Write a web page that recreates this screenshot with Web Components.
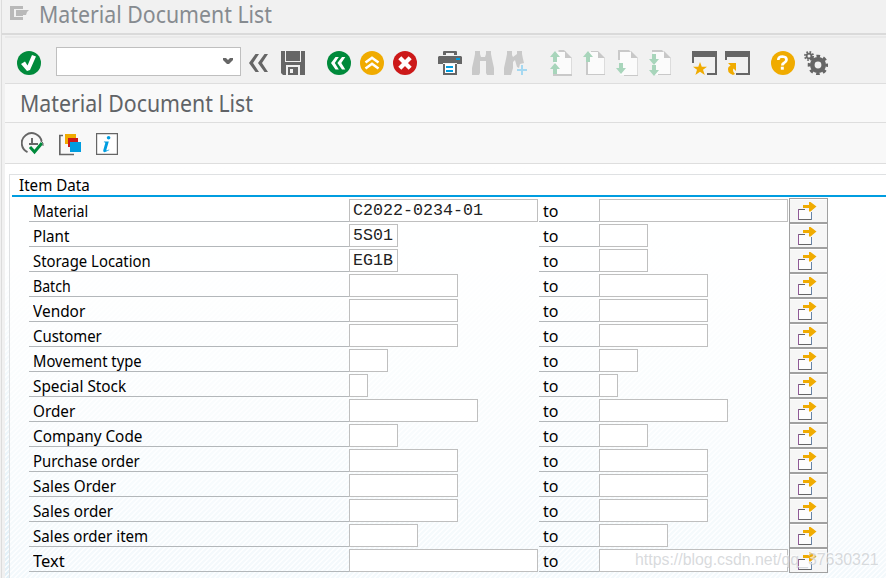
<!DOCTYPE html>
<html lang="en">
<head>
<meta charset="utf-8">
<title>Material Document List</title>
<style>
  body { margin: 0; overflow: hidden; }
</style>
</head>
<body>
<sap-window></sap-window>
<script>
// every icon is drawn in its own pixel box: [width, height, markup]
const arrowUp = "M0 6 L5 0 L10 6 H7 V11 H3 V6Z";
const arrowDown = "M0 5 H3 V0 H7 V5 H10 L5 11Z";
const page = `<path d="M7 2 H16 V8 H22 V25 H4 V2Z" fill="#fbfbfb"/><path d="M15 1 L22 8 H15Z" fill="#c8c8c8"/><path d="M21 8 H22 V25 H21Z" fill="#dcdcdc"/>`;
const frame = `<path d="M0 0 H25 V24 H15 V22 H23 V6 H2 V12 H0Z" fill="#666"/>`;
const ICONS = {
  window: [20, 15, `<path d="M0 0 H13 V3 H4 V11 H13 V14 H0Z" fill="#b9b9b9"/><path d="M6 4 H19 L17 6 L16 9 H13 V10 H6Z" fill="#b9b9b9"/>`],
  enter: [24, 24, `<circle cx="12" cy="12" r="12" fill="#008a3b"/><path d="M4 13 L8 10.5 L10.5 14.5 L15 4 L19 5.5 L13 19 L10 20Z" fill="#fff"/>`],
  collapse: [20, 18, `<path d="M10 0 L4 9 L10 18 H6.5 L0 9 L6.5 0Z M19 0 L13 9 L19 18 H15.5 L9 9 L15.5 0Z" fill="#666"/>`],
  save: [24, 24, `<path d="M0 0 H4 V11 H20 V0 H24 V24 H19 V14 H5 V24 H2 L0 22Z M5 0 H19 V10 H5Z" fill="#666"/><path d="M7 16 H17 V24 H7Z M9 18 V22 H12 V18Z" fill="#666" fill-rule="evenodd"/><path d="M9 18 H12 V22 H9Z" fill="#f1f1f1"/>`],
  back: [24, 24, `<circle cx="12" cy="12" r="12" fill="#008a3b"/><path d="M11.8 6 L7.8 12 L11.8 18.5 H8.5 L4 12 L8.5 6Z M18.3 6 L14.3 12 L18.3 18.5 H15 L10.4 12 L15 6Z" fill="#fff"/>`],
  exit: [24, 24, `<circle cx="12" cy="12" r="12" fill="#f0ab00"/><path d="M5.5 11.5 L12 6.8 L18.5 11.5 M5.5 17.5 L12 12.8 L18.5 17.5" fill="none" stroke="#fff" stroke-width="2.6"/>`],
  cancel: [24, 24, `<circle cx="12" cy="12" r="12" fill="#cc1919"/><path d="M6.8 6.8 L17.2 17.2 M17.2 6.8 L6.8 17.2" stroke="#fff" stroke-width="4.3"/>`],
  print: [24, 24, `<path d="M5 4 V1 Q5 0 6 0 H18 Q19 0 19 1 V4 H16 V2 H8 V4Z" fill="#666"/><path d="M1 5 H23 L24 6 V13 H19 V12 H5 V13 H0 V6Z" fill="#666"/><path d="M5 13 H7 V22 H17 V13 H19 V24 H5Z" fill="#666"/><path d="M7 13 H17 V22 H7Z" fill="#fff"/><path d="M18 7 H22 V9 H18Z M8 15 H15 V17 H8Z M8 19 H15 V21 H8Z" fill="#009de0"/>`],
  find: [22, 24, `<path d="M3 0 H8 V3 L9 6 H13 L14 3 V0 H19 V3 L20 8 L22 17 V24 H15 L14 22 V10 H8 V22 L7 24 H0 V17 L2 8 L3 3Z" fill="#c9c9c9"/>`],
  findNext: [24, 24, `<path d="M3 0 H8 V4 L9 6 L13 3 V0 H18 V3 L19 8 L20 12 L16 13 L15 17 L13 16 L11 9 L9 11 V17 L7 24 H0 V17 L2 8 L3 3Z" fill="#c9c9c9"/><path d="M17 14 H19 V18 H23 V20 H19 V24 H17 V20 H13 V18 H17Z" fill="#a5d8f1"/>`],
  firstPage: [22, 26, `${page}<path d="M8 1 L9 0 H14 L16 2 H9Z M3 24 H22 V26 H3Z" fill="#c9c9c9"/><path d="${arrowUp}" transform="translate(0 1)" fill="#a8d5bb"/><path d="${arrowUp}" transform="translate(0 13)" fill="#a8d5bb"/>`],
  prevPage: [22, 26, `${page}<path d="M8 1 H15 V2 H8Z M3 12 H5 V24 H22 V25 H3Z" fill="#c9c9c9"/><path d="${arrowUp}" transform="translate(0 1)" fill="#a8d5bb"/>`],
  nextPage: [22, 26, `${page}<path d="M2 0 H13 L15 2 H4 V10 H2Z M8 25 H22 V26 H8Z" fill="#c9c9c9"/><path d="${arrowDown}" transform="translate(0 13)" fill="#a8d5bb"/>`],
  lastPage: [22, 26, `${page}<path d="M3 0 H13 L15 2 H3Z M9 24 H22 V25 H9Z" fill="#c9c9c9"/><path d="${arrowDown}" transform="translate(0 4)" fill="#a8d5bb"/><path d="${arrowDown}" transform="translate(0 15)" fill="#a8d5bb"/>`],
  session: [25, 24, `${frame}<path d="M8 11 L9.8 15.8 H15 L11 18.8 L12.8 24 L8 20.8 L3.4 24 L5 18.8 L1 15.8 H6.3Z" fill="#f0ab00"/>`],
  shortcut: [25, 24, `<path d="M0 0 H25 V24 H11 V22 H23 V6 H2 V9 H0Z" fill="#666"/><path d="M3 12 H11 V20 L8.5 17.5 Q7 20 10 23 L8 24 Q1 21 3.5 16 L5.5 14.5Z" fill="#f0ab00"/>`],
  help: [24, 24, `<circle cx="12" cy="12" r="12" fill="#f0ab00"/><path d="M7.3 9 Q7.3 5.5 11.5 5.5 Q15.6 5.7 15.5 8.8 Q15.4 10.4 13 12 Q11.3 13 11.3 14.5" fill="none" stroke="#fff" stroke-width="2.7"/><path d="M9.8 15.7 H12.8 V18.7 H9.8Z" fill="#fff"/>`],
  settings: [24, 24, `<circle cx="14" cy="14" r="5.7" fill="none" stroke="#666" stroke-width="4.6"/><circle cx="14" cy="14" r="8.8" fill="none" stroke="#666" stroke-width="3" stroke-dasharray="3.6 3.31" stroke-dashoffset="1.8"/><circle cx="5" cy="5" r="2.4" fill="none" stroke="#666" stroke-width="1.8"/><circle cx="5" cy="5" r="4.1" fill="none" stroke="#666" stroke-width="1.8" stroke-dasharray="1.7 1.52"/>`],
  execute: [24, 24, `<path d="M6.5 20.2 A10 10 0 1 1 20.6 9.5" fill="none" stroke="#666" stroke-width="1.9"/><path d="M11 6 V13 M8 12 H17" fill="none" stroke="#666" stroke-width="1.9"/><path d="M9 15 L13.5 20 L21 11" fill="none" stroke="#008a3b" stroke-width="3"/><path d="M20 9 L22 11 V14" fill="none" stroke="#666" stroke-width="1"/>`],
  variant: [22, 23, `<path d="M4 2.5 H.8 V21.5 H15" fill="none" stroke="#666" stroke-width="1.7"/><path d="M6 1 H17 V11 H6Z" fill="#f0ab00"/><path d="M9 5 H19 V14 H9Z" fill="#cc1919"/><path d="M11 9 H22 V19 H11Z" fill="#009de0"/>`],
  info: [22, 22, `<path d="M.6 .6 H21.4 V21.4 H.6Z" fill="#fff" stroke="#666" stroke-width="1.2"/><path d="M8 8.4 H12.8 L10.3 17 Q10.3 18 13 16.5 L13.4 17 Q7 21 7.2 17.5 L9.3 10 Q9.5 9 7.8 9.2Z" fill="#009de0"/><circle cx="12.6" cy="4.8" r="1.8" fill="#009de0"/>`],
  multiple: [19, 19, `<path d="M7 7.5 H.5 V17.5 H13.5 V10" fill="#fdfdfd" stroke="#666"/><path d="M.5 7 V18" stroke="#905a98"/><path d="M13.5 10 V18" stroke="#6784a8"/><path d="M5 3 H11 V0 H12.5 L18.5 4.5 L12.5 9.5 H11 V6 H5Z" fill="#f0ab00"/>`]
};

class SapIcon extends HTMLElement {
  constructor() {
    super();
    this.attachShadow({ mode: "open" });
  }

  connectedCallback() {
    const [w, h, shape] = ICONS[this.getAttribute("name")];
    this.shadowRoot.innerHTML = `
      <style>
        :host { display: block; flex: none; width: ${w}px; height: ${h}px; }
        svg { display: block; }
      </style>
      <svg width="${w}" height="${h}" viewBox="0 0 ${w} ${h}">${shape}</svg>`;
  }
}
customElements.define("sap-icon", SapIcon);

// a caption squeezed to a fixed width
class SapCaption extends HTMLElement {
  constructor() {
    super();
    this.attachShadow({ mode: "open" });
    this.shadowRoot.innerHTML = `
      <style>
        :host { display: block; white-space: nowrap; }
        span { display: inline-block; transform-origin: 0 50%; }
      </style>
      <span><slot></slot></span>`;
  }

  connectedCallback() {
    const width = Number(this.getAttribute("width"));
    const span = this.shadowRoot.querySelector("span");
    if (width) span.style.transform = `scaleX(${width / span.offsetWidth})`;
  }
}
customElements.define("sap-caption", SapCaption);

class SapField extends HTMLElement {
  constructor() {
    super();
    this.attachShadow({ mode: "open" });
  }

  connectedCallback() {
    this.shadowRoot.innerHTML = `
      <style>
        :host {
          display: block;
          box-sizing: border-box;
          width: ${this.getAttribute("width")}px;
          height: 23px;
          padding-left: 3px;
          border: 1px solid #bfbfbf;
          background: #fff;
          color: #222;
          font: 16.67px/22px "Liberation Mono", monospace;
          white-space: nowrap;
        }
      </style>
      <slot></slot>`;
  }
}
customElements.define("sap-field", SapField);

class SapRow extends HTMLElement {
  constructor() {
    super();
    this.attachShadow({ mode: "open" });
  }

  connectedCallback() {
    const size = this.getAttribute("size");
    const value = this.getAttribute("value") || "";
    this.shadowRoot.innerHTML = `
      <style>
        :host {
          display: grid;
          grid-template-columns: 320px 190px 60px 190px 39px;
          align-items: center;
          height: 25px;
        }
        .label {
          box-sizing: border-box;
          height: 23px;
          padding-left: 4px;
          border-bottom: 1px solid #b3b7ba;
          line-height: 24px;
        }
        .button {
          display: flex;
          box-sizing: border-box;
          height: 25px;
          padding: 3px 0 0 8px;
          border: 1px solid #a0a0a0;
          background: #f6f6f6;
          box-shadow: inset 0 1px #fff;
        }
      </style>
      <div class="label"><sap-caption width="${this.getAttribute("fit")}"><slot></slot></sap-caption></div>
      <sap-field width="${size}">${value}</sap-field>
      <div class="label"><sap-caption width="15">to</sap-caption></div>
      <sap-field width="${size}"></sap-field>
      <div class="button"><sap-icon name="multiple"></sap-icon></div>`;
  }
}
customElements.define("sap-row", SapRow);

class SapGroup extends HTMLElement {
  constructor() {
    super();
    this.attachShadow({ mode: "open" });
    this.shadowRoot.innerHTML = `
      <style>
        :host {
          display: block;
          height: 420px;
          margin: 10px 0 0 4px;
          border: solid #dfe1e3;
          border-width: 1px 0 0 1px;
          background: rgba(255, 255, 255, .6);
        }
        header {
          box-sizing: border-box;
          height: 22px;
          margin-left: 2px;
          padding-left: 7px;
          border-bottom: 2px solid #009de0;
          line-height: 20px;
        }
        .rows { padding: 1px 0 0 19px; }
      </style>
      <header><slot name="title"></slot></header>
      <div class="rows"><slot></slot></div>`;
  }
}
customElements.define("sap-group", SapGroup);

class SapToolbar extends HTMLElement {
  constructor() {
    super();
    this.attachShadow({ mode: "open" });
    this.shadowRoot.innerHTML = `
      <style>
        :host {
          display: flex;
          box-sizing: border-box;
          align-items: center;
          border-bottom: 1px solid #dedede;
        }
      </style>
      <slot></slot>`;
  }
}
customElements.define("sap-toolbar", SapToolbar);

class SapCommand extends HTMLElement {
  constructor() {
    super();
    this.attachShadow({ mode: "open" });
    this.shadowRoot.innerHTML = `
      <style>
        :host {
          display: flex;
          box-sizing: border-box;
          flex: none;
          justify-content: flex-end;
          width: 185px;
          height: 29px;
          padding: 10px 7px 0 0;
          border: 1px solid #bfbfbf;
          background: #fff;
        }
      </style>
      <svg width="10" height="6"><path d="M0 0 H3 L5 2 L7 0 H10 V2 L6 6 H4 L0 2Z" fill="#666"/></svg>`;
  }
}
customElements.define("sap-command", SapCommand);

class SapWindow extends HTMLElement {
  static get rows() {
    // label, label width, field width, value
    return [
      ["Material", 55, 189, "C2022-0234-01"],
      ["Plant", 36, 49, "5S01"],
      ["Storage Location", 118, 49, "EG1B"],
      ["Batch", 38, 109],
      ["Vendor", 52, 109],
      ["Customer", 69, 109],
      ["Movement type", 109, 39],
      ["Special Stock", 93, 19],
      ["Order", 42, 129],
      ["Company Code", 109, 49],
      ["Purchase order", 107, 109],
      ["Sales Order", 83, 109],
      ["Sales order", 80, 109],
      ["Sales order item", 115, 69],
      ["Text", 32, 189]
    ];
  }

  // name and the gap in front of it
  static get tools() {
    return [
      ["collapse", 8], ["save", 12], ["back", 22], ["exit", 9], ["cancel", 9],
      ["print", 21], ["find", 10], ["findNext", 10], ["firstPage", 22],
      ["prevPage", 11], ["nextPage", 11], ["lastPage", 11],
      ["session", 21], ["shortcut", 8], ["help", 21], ["settings", 9]
    ];
  }

  constructor() {
    super();
    this.attachShadow({ mode: "open" });
  }

  connectedCallback() {
    const tools = SapWindow.tools
      .map(([name, gap]) => `<sap-icon name="${name}" style="margin-left: ${gap}px"></sap-icon>`).join("");
    const rows = SapWindow.rows
      .map(([label, fit, size, value]) => `<sap-row fit="${fit}" size="${size}" value="${value || ""}">${label}</sap-row>`).join("");
    this.shadowRoot.innerHTML = `
      <style>
        :host {
          display: block;
          position: relative;
          box-sizing: border-box;
          width: 886px;
          height: 578px;
          overflow: hidden;
          padding-left: 1px;
          background: #f1f1f1;
          color: #000;
          font: 16px "Noto Sans", "DejaVu Sans Condensed", sans-serif;
        }
        .frame { border-left: 1px solid #dcdcdc; }
        .caption {
          display: flex;
          box-sizing: border-box;
          height: 35px;
          padding: 6px 0 0 8px;
          border-bottom: 2px solid #dadada;
          color: #868b90;
          font-size: 23.5px;
          line-height: 28px;
        }
        .caption sap-caption { margin: -6px 0 0 9px; }
        .client { margin-left: 3px; }
        .gap { height: 1px; border-bottom: 2px solid #e9e9e9; }
        .main { height: 46px; padding: 4px 0 0 12px; }
        .main sap-command { margin: -3px 0 0 15px; }
        .title {
          height: 39px;
          padding-left: 15px;
          background: #f9f9f9;
          color: #606367;
          font-size: 23.5px;
          line-height: 36px;
        }
        .app { height: 41px; padding: 2px 0 0 16px; gap: 15px; background: #f8f8f8; }
        .app [name=variant] { margin-left: -1px; }
        .content {
          display: flow-root;
          height: 414px;
          background:
            linear-gradient(#fff, rgba(255, 255, 255, .9) 25%, rgba(255, 255, 255, 0)),
            repeating-linear-gradient(135deg, #e2f0f7 0 1.77px, #f9fcfe 1.77px 3.535px);
        }
        .watermark {
          position: absolute;
          left: 635px;
          top: 550px;
          color: rgba(195, 198, 202, .65);
          font: 16px/20px "Liberation Sans", sans-serif;
          text-shadow: -1px -1px rgba(255, 255, 255, .7);
        }
      </style>
      <div class="frame">
        <div class="caption">
          <sap-icon name="window"></sap-icon>
          <sap-caption width="233">Material Document List</sap-caption>
        </div>
        <div class="client">
          <div class="gap"></div>
          <sap-toolbar class="main"><sap-icon name="enter"></sap-icon><sap-command></sap-command>${tools}</sap-toolbar>
          <sap-toolbar class="title"><sap-caption width="233">Material Document List</sap-caption></sap-toolbar>
          <sap-toolbar class="app">
            <sap-icon name="execute"></sap-icon>
            <sap-icon name="variant"></sap-icon>
            <sap-icon name="info"></sap-icon>
          </sap-toolbar>
          <div class="content">
            <sap-group><sap-caption slot="title" width="71">Item Data</sap-caption>${rows}</sap-group>
          </div>
        </div>
      </div>
      <sap-caption class="watermark" width="244">https://blog.csdn.net/qq_37630321</sap-caption>`;
  }
}
customElements.define("sap-window", SapWindow);
</script>
</body>
</html>
